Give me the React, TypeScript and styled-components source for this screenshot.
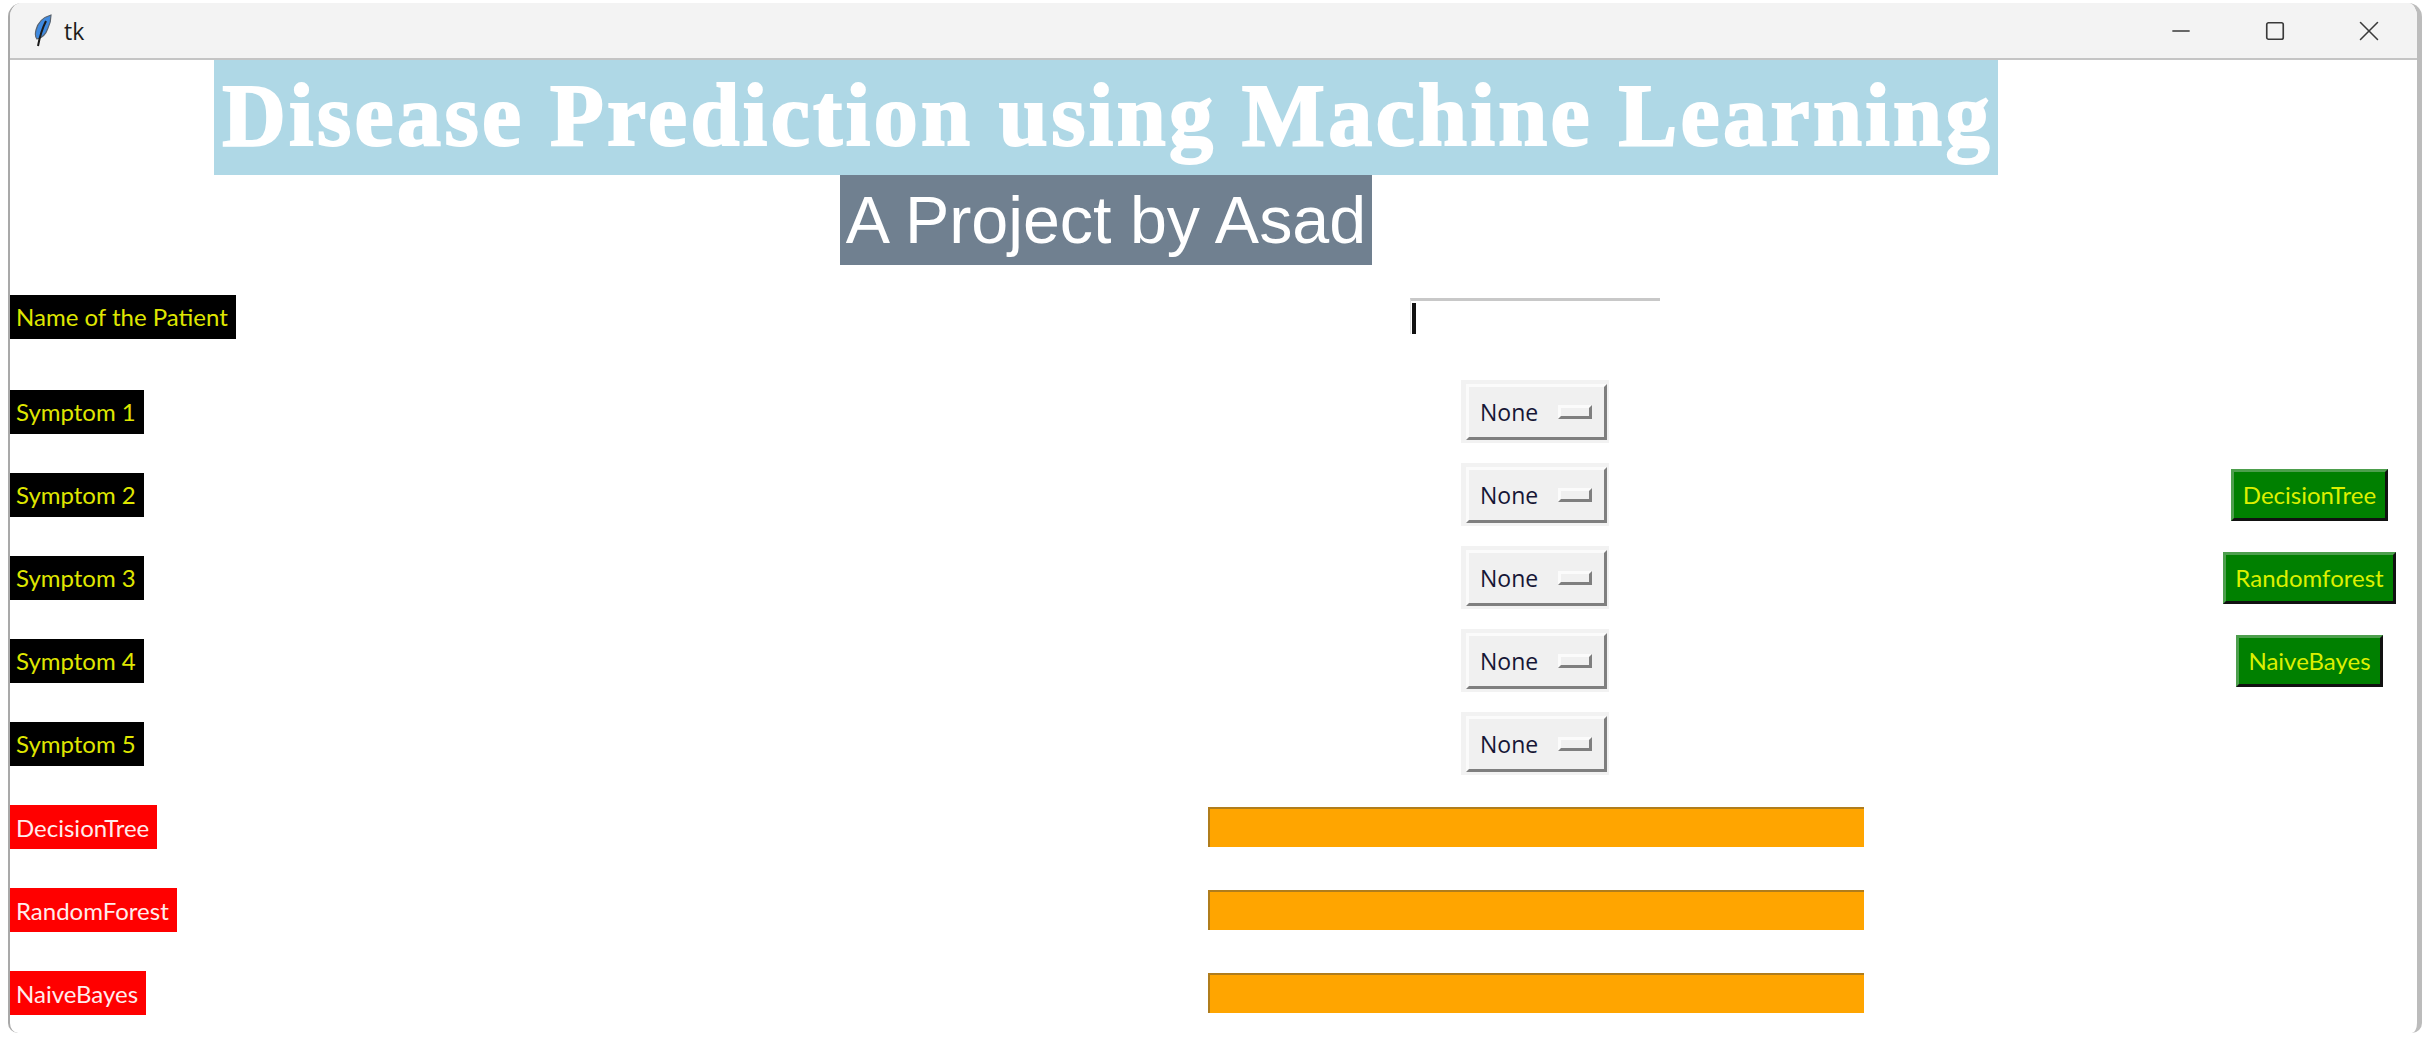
import { Fragment } from "react";
import styled, { createGlobalStyle } from "styled-components";
import { Minus, Square, X } from "lucide-react";

const GlobalStyle = createGlobalStyle`
  html, body {
    margin: 0;
    background: #fff;
    overflow: hidden;
  }
`;

const Window = styled.div`
  box-sizing: border-box;
  width: 2414px;
  height: 1030px;
  margin: 3px 0 0 8px;
  border-left: 2px solid #a9a9a9;
  border-right: 5px solid #bcbcbc;
  border-radius: 14px 14px 10px 10px;
  overflow: hidden;
  font-family: Lato, "Noto Sans", sans-serif;
`;

const TitleBar = styled.div`
  box-sizing: border-box;
  height: 57px;
  display: flex;
  align-items: center;
  background: #f3f3f3;
  border-bottom: 2px solid #c4c4c4;
  padding-left: 24px;
`;

const TitleText = styled.span`
  margin-left: 12px;
  font-family: "Open Sans", sans-serif;
  font-size: 23px;
  color: #1c1c1c;
`;

const WindowControls = styled.div`
  margin-left: auto;
  padding-right: 1px;
  display: flex;
  align-items: center;
`;

const ControlButton = styled.div`
  width: 94px;
  height: 55px;
  display: flex;
  align-items: center;
  justify-content: center;
  color: #3a3a3a;
`;

const Form = styled.div`
  display: grid;
  grid-template-columns: 858px 1334px 1fr;
  grid-template-rows: 115px 90px 105px repeat(8, 83.1px);
  align-items: center;
`;

const Heading = styled.h1`
  grid-column: 1 / span 2;
  justify-self: center;
  align-self: stretch;
  margin: 0;
  padding: 0 5px 0 8px;
  background: #afd8e6;
  color: #fff;
  font-family: "Liberation Serif", serif;
  font-size: 88px;
  font-weight: 700;
  line-height: 112px;
  letter-spacing: 3.4px;
  -webkit-text-stroke: 2px #fff;
  white-space: nowrap;
`;

const SubHeading = styled.h2`
  grid-column: 1 / span 2;
  justify-self: center;
  align-self: stretch;
  margin: 0;
  padding: 0 6px;
  background: #708090;
  color: #fff;
  font-family: "Liberation Sans", sans-serif;
  font-size: 66.4px;
  font-weight: 400;
  line-height: 90px;
  white-space: nowrap;
`;

const FieldLabel = styled.div<{ $tone: "black" | "red"; $raised?: boolean }>`
  grid-column: 1;
  justify-self: start;
  box-sizing: border-box;
  height: 44px;
  padding: 0 8px 0 6px;
  display: flex;
  align-items: center;
  font-size: 24px;
  white-space: nowrap;
  background: ${(p) => (p.$tone === "black" ? "#000" : "#ff0000")};
  color: ${(p) => (p.$tone === "black" ? "#dfe600" : "#ffecec")};
  margin-top: ${(p) => (p.$raised ? "-2px" : "0")};
`;

const NameEntry = styled.div`
  grid-column: 2;
  justify-self: center;
  margin-top: -4px;
  box-sizing: border-box;
  width: 250px;
  height: 36px;
  border-top: 3px solid #c8c8c8;
  border-left: 1px solid #e2e2e2;
  padding: 2px 0 0 1px;
`;

const Caret = styled.div`
  width: 4px;
  height: 31px;
  background: #111;
`;

const OptionFrame = styled.div`
  grid-column: 2;
  justify-self: center;
  box-sizing: border-box;
  width: 148px;
  height: 63px;
  padding: 4px 2px 3px 5px;
  background: #f2f2f2;
`;

const OptionButton = styled.div`
  box-sizing: border-box;
  height: 100%;
  display: flex;
  align-items: center;
  justify-content: space-between;
  padding: 0 12px 0 11px;
  background: #f0f0f0;
  border: 3px solid;
  border-color: #fbfbfb #7f7f7f #7f7f7f #fbfbfb;
  color: #161636;
  font-family: "Open Sans", sans-serif;
  font-size: 23px;
`;

const OptionIndicator = styled.span`
  box-sizing: border-box;
  width: 34px;
  height: 14px;
  background: #f0f0f0;
  border: 3px solid;
  border-color: #fbfbfb #7f7f7f #7f7f7f #fbfbfb;
`;

const ResultField = styled.div`
  grid-column: 2;
  justify-self: center;
  box-sizing: border-box;
  width: 656px;
  height: 40px;
  margin-left: 2px;
  background: #ffa500;
  border-top: 2px solid #b07d1c;
  border-left: 2px solid #b07d1c;
`;

const PredictButton = styled.div`
  grid-column: 3;
  justify-self: center;
  box-sizing: border-box;
  height: 52px;
  padding: 0 9px;
  display: flex;
  align-items: center;
  background: #008000;
  color: #dcf000;
  font-size: 24px;
  white-space: nowrap;
  border: 3px solid;
  border-color: #4d9f4d #111 #111 #4d9f4d;
`;

const FeatherIcon = () => (
  <svg width="18" height="33" viewBox="0 0 18 33">
    <path d="M17 1C10 3 4 8 2 16c-1 4-1 7 1 9 5-1 9-5 11-11 2-4 3-9 3-13z" fill="#3f8ae0" stroke="#5a6470" strokeWidth="1.2" />
    <path d="M12 7C9 13 6 21 4 32" fill="none" stroke="#1a1a1a" strokeWidth="2" />
  </svg>
);

const symptoms = ["Symptom 1", "Symptom 2", "Symptom 3", "Symptom 4", "Symptom 5"];
const predictors = ["DecisionTree", "Randomforest", "NaiveBayes"];
const results = ["DecisionTree", "RandomForest", "NaiveBayes"];

export default function App() {
  return (
    <>
      <GlobalStyle />
      <Window>
        <TitleBar>
          <FeatherIcon />
          <TitleText>tk</TitleText>
          <WindowControls>
            <ControlButton>
              <Minus size={28} strokeWidth={1.2} />
            </ControlButton>
            <ControlButton>
              <Square size={22} strokeWidth={1.8} />
            </ControlButton>
            <ControlButton>
              <X size={34} strokeWidth={1.1} />
            </ControlButton>
          </WindowControls>
        </TitleBar>
        <Form>
          <Heading>Disease Prediction using Machine Learning</Heading>
          <SubHeading>A Project by Asad</SubHeading>
          <FieldLabel $tone="black" $raised>
            Name of the Patient
          </FieldLabel>
          <NameEntry>
            <Caret />
          </NameEntry>
          {symptoms.map((symptom, i) => (
            <Fragment key={symptom}>
              <FieldLabel $tone="black">{symptom}</FieldLabel>
              <OptionFrame>
                <OptionButton>
                  None
                  <OptionIndicator />
                </OptionButton>
              </OptionFrame>
              {predictors[i - 1] && <PredictButton>{predictors[i - 1]}</PredictButton>}
            </Fragment>
          ))}
          {results.map((name) => (
            <Fragment key={name}>
              <FieldLabel $tone="red">{name}</FieldLabel>
              <ResultField />
            </Fragment>
          ))}
        </Form>
      </Window>
    </>
  );
}
